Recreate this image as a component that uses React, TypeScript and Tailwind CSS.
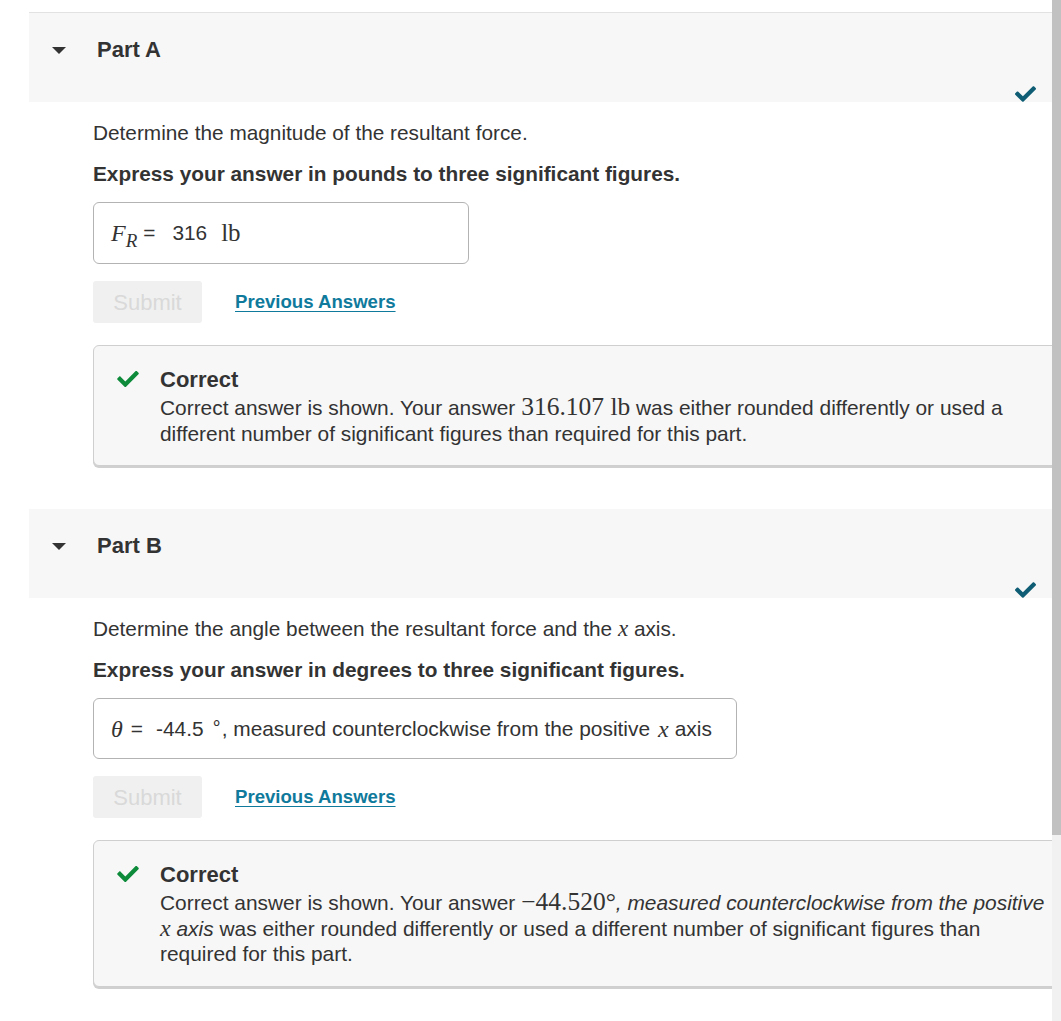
import React from "react";

const CheckIcon = ({ className }: { className?: string }) => (
  <svg viewBox="0 0 512 380" className={className} fill="currentColor">
    <path transform="translate(0,-66)" d="M173.898 439.404l-166.4-166.4c-9.997-9.997-9.997-26.206 0-36.204l36.203-36.204c9.997-9.998 26.207-9.998 36.204 0L192 312.69 432.095 72.596c9.997-9.997 26.207-9.997 36.204 0l36.203 36.204c9.997 9.997 9.997 26.206 0 36.204l-294.4 294.401c-9.998 9.997-26.207 9.997-36.204-.001z" />
  </svg>
);

const Triangle = () => (
  <svg viewBox="0 0 14 7" className="w-[14px] h-[7px] text-[#333]" fill="currentColor">
    <path d="M0 0 L14 0 L7 7 Z" />
  </svg>
);

const serif = { fontFamily: '"Liberation Serif", "DejaVu Serif", serif' };

function PartHeader({ label }: { label: string }) {
  return (
    <div className="relative h-[89px] bg-[#f7f7f7] flex items-start">
      <div className="flex items-center pt-[25px]">
        <div className="w-[23px]" />
        <Triangle />
        <div className="w-[31px]" />
        <span className="text-[22px] font-bold text-[#333] leading-[24px]">{label}</span>
      </div>
      <CheckIcon className="absolute right-[16px] bottom-[0px] w-[21px] h-[16px] text-[#0e5d74]" />
    </div>
  );
}

function SubmitRow() {
  return (
    <div className="flex items-center mt-[17px]">
      <div className="w-[109px] h-[42px] rounded-[3px] bg-[#f0f0f0] text-[#d9d9d9] text-[22px] flex items-center justify-center">
        Submit
      </div>
      <a className="ml-[33px] text-[18.6px] font-bold text-[#0f7a9c] underline underline-offset-[3px]">
        Previous Answers
      </a>
    </div>
  );
}

function CorrectBox({ children }: { children: React.ReactNode }) {
  return (
    <div className="mt-[22px] -mr-[20px] bg-[#f7f7f7] border border-[#cfcfcf] rounded-l-[6px] shadow-[0_2px_0_#d0d0d0] flex pt-[22px] pb-[19px]">
      <div className="w-[23px]" />
      <CheckIcon className="w-[22px] h-[16px] mt-[3px] text-[#0d8a3a]" />
      <div className="ml-[21px] text-[#333]">
        <div className="text-[22px] font-bold leading-[24px]">Correct</div>
        <div className="text-[20.9px] leading-[25.5px] mt-[2px] whitespace-nowrap">{children}</div>
      </div>
    </div>
  );
}

export default function App() {
  return (
    <div
      className="flex w-full h-[1021px] overflow-hidden bg-white text-[#333]"
      style={{ fontFamily: '"Liberation Sans", Arial, sans-serif' }}
    >
      <div className="flex-1 min-w-0 overflow-hidden pl-[29px] pt-[12px]">
        {/* Part A */}
        <div className="border-t border-[#e2e2e2]">
          <PartHeader label="Part A" />
        </div>
        <div className="pl-[64px]">
          <p className="mt-[19px] text-[20.8px] leading-[24px]">Determine the magnitude of the resultant force.</p>
          <p className="mt-[17px] text-[20.8px] leading-[24px] font-bold">
            Express your answer in pounds to three significant figures.
          </p>
          <div className="mt-[16px] w-[376px] h-[62px] border border-[#b3b3b3] rounded-[6px] flex items-center pl-[17px] text-[20.8px]">
            <span className="italic text-[24px]" style={serif}>
              F<sub className="text-[19px] italic align-[-1px]">R</sub>
            </span>
            <span className="ml-[6px]">=</span>
            <span className="ml-[17px]">316</span>
            <span className="ml-[14px] text-[25px]" style={serif}>lb</span>
          </div>
          <SubmitRow />
          <CorrectBox>
            Correct answer is shown. Your answer{" "}
            <span className="text-[25.5px]" style={serif}>316.107 lb</span> was either rounded differently or used a
            <br />
            different number of significant figures than required for this part.
          </CorrectBox>
        </div>

        {/* Part B */}
        <div className="mt-[43px]">
          <PartHeader label="Part B" />
        </div>
        <div className="pl-[64px]">
          <p className="mt-[19px] text-[20.8px] leading-[24px]">
            Determine the angle between the resultant force and the{" "}
            <span className="italic text-[23px]" style={serif}>x</span> axis.
          </p>
          <p className="mt-[17px] text-[20.8px] leading-[24px] font-bold">
            Express your answer in degrees to three significant figures.
          </p>
          <div className="mt-[16px] w-[644px] h-[61px] border border-[#b3b3b3] rounded-[6px] flex items-center pl-[17px] text-[20.9px] whitespace-pre">
            <span className="italic text-[24px]" style={serif}>θ</span>
            <span className="ml-[8px]">=</span>
            <span className="ml-[13px]">-44.5</span>
            <span className="ml-[7px] relative -top-[6px] text-[18px]">∘</span>
            <span>, measured counterclockwise from the positive</span>
            <span className="italic text-[24px] ml-[8px] mr-[6px]" style={serif}>x</span>
            <span>axis</span>
          </div>
          <SubmitRow />
          <CorrectBox>
            Correct answer is shown. Your answer{" "}
            <span className="text-[25.5px]" style={serif}>−44.520°</span>
            <i>, measured counterclockwise from the positive</i>
            <br />
            <i>
              <span className="text-[24px]" style={serif}>x</span> axis
            </i>{" "}
            was either rounded differently or used a different number of significant figures than
            <br />
            required for this part.
          </CorrectBox>
        </div>
      </div>
      <div className="w-[9px] flex flex-col shrink-0">
        <div className="h-[835px] bg-[#c1c1c1]" />
        <div className="flex-1 bg-[#f1f1f1]" />
      </div>
    </div>
  );
}
